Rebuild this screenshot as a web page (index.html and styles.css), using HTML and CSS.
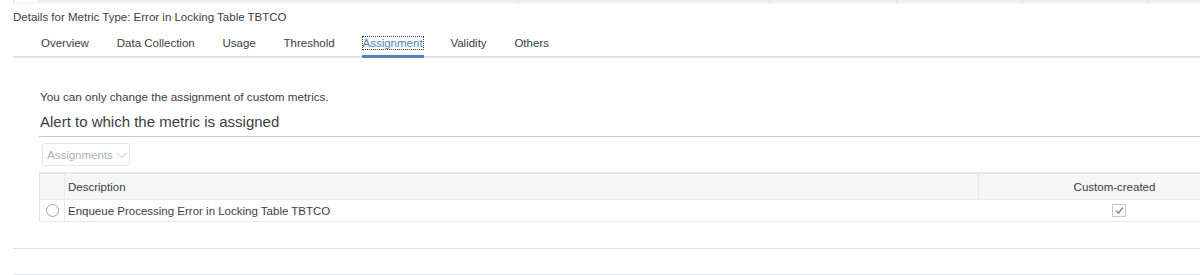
FILE: index.html
```html
<!DOCTYPE html>
<html>
<head>
<meta charset="utf-8">
<link rel="stylesheet" href="styles.css">
</head>
<body>
<div class="strip">
  <div class="cell c1"></div>
  <div class="cell c2"></div>
  <div class="cell c3"></div>
  <div class="cell c4"></div>
  <div class="cell c5"></div>
  <div class="cell c6"></div>
  <div class="cell c7"></div>
  <div class="cell c8"></div>
</div>
<div class="title">Details for Metric Type: Error in Locking Table TBTCO</div>
<div class="tabbar">
  <div class="tab">Overview</div>
  <div class="tab">Data Collection</div>
  <div class="tab">Usage</div>
  <div class="tab">Threshold</div>
  <div class="tab active"><span class="focus">Assignment</span></div>
  <div class="tab">Validity</div>
  <div class="tab">Others</div>
</div>
<div class="content">
  <div class="info">You can only change the assignment of custom metrics.</div>
  <div class="heading">Alert to which the metric is assigned</div>
  <div class="toolbar">
    <div class="btn">Assignments
      <svg class="chev" width="11" height="7" viewBox="0 0 11 7"><path d="M0.5 0.8 L5.5 5.8 L10.5 0.8" fill="none" stroke="#b8c4cf" stroke-width="1"/></svg>
    </div>
  </div>
  <div class="table">
    <div class="row head">
      <div class="sel"></div>
      <div class="desc">Description</div>
      <div class="cust">Custom-created</div>
    </div>
    <div class="row data">
      <div class="sel"><span class="radio"></span></div>
      <div class="desc">Enqueue Processing Error in Locking Table TBTCO</div>
      <div class="cust"><span class="check"><svg width="11" height="9" viewBox="0 0 11 9"><path d="M2 4.6 L4.4 7 L9 1.6" fill="none" stroke="#4a86c0" stroke-width="1.2"/></svg></span></div>
    </div>
  </div>
</div>
<div class="sep sep1"></div>
<div class="sep sep2"></div>
</body>
</html>
```
FILE: styles.css
```css
html, body {
  margin: 0;
  padding: 0;
  background: #ffffff;
  overflow: hidden;
}
body {
  width: 1200px;
  height: 275px;
  font-family: "Liberation Sans", Arial, sans-serif;
  color: #3a3e42;
  font-size: 11.5px;
}
.strip {
  display: flex;
  margin-left: 13px;
  height: 3px;
  background: #efefef;
  border-bottom: 1px solid #f4f4f4;
}
.cell {
  height: 3px;
  border-right: 1px solid #e2e2e2;
  box-sizing: border-box;
}
.c1 { width: 2px; border-right: none; }
.c2 { width: 22px; background: #ffffff; border-right: none; }
.c3 { width: 481px; }
.c4 { width: 252px; }
.c5 { width: 127px; }
.c6 { width: 126px; }
.c7 { width: 126px; }
.c8 { flex: 1; border-right: none; }
.title {
  padding-left: 13px;
  height: 27px;
  line-height: 27px;
  font-size: 11.5px;
}
.tabbar {
  display: flex;
  margin-left: 13px;
  padding-left: 28px;
  gap: 27.8px;
  height: 25px;
  border-bottom: 2px solid #d5e3f0;
}
.tab {
  height: 25px;
  line-height: 25px;
  font-size: 11.5px;
  color: #3a3e42;
  position: relative;
}
.tab.active {
  color: #4c85bb;
}
.tab.active::after {
  content: "";
  position: absolute;
  left: -1px;
  right: -1px;
  bottom: -2px;
  height: 3px;
  background: #4f86b8;
}
.focus {
  outline: 1px dotted #444;
  outline-offset: 0px;
}
.content {
  padding-left: 39px;
  padding-top: 31px;
}
.info {
  height: 16px;
  line-height: 16px;
  font-size: 11.7px;
  padding-left: 1px;
}
.heading {
  margin-top: 7px;
  height: 24px;
  line-height: 20px;
  font-size: 15px;
  padding-left: 1px;
  border-bottom: 1px solid #c9c9c9;
}
.toolbar {
  padding-top: 6px;
  padding-left: 3px;
  height: 23px;
}
.btn {
  display: inline-flex;
  align-items: center;
  box-sizing: border-box;
  width: 88px;
  height: 23px;
  padding-left: 4px;
  border: 1px solid #e3e7eb;
  border-radius: 3px;
  color: #a7b5c3;
  font-size: 11.5px;
  gap: 3px;
}
.chev {
  margin-top: 1px;
}
.table {
  margin-top: 6px;
  width: 1215px;
  border-left: 1px solid #e5e5e5;
  box-sizing: border-box;
}
.row {
  display: flex;
  box-sizing: border-box;
  border-bottom: 1px solid #e8e8e8;
}
.row.head {
  height: 28px;
  background: #f6f6f6;
  border-top: 2px solid #e6e6e6;
  border-bottom: 1px solid #ececec;
}
.row.data {
  height: 22px;
}
.sel {
  width: 24px;
  flex: none;
  border-right: 1px solid #e8e8e8;
  display: flex;
  align-items: center;
  justify-content: center;
}
.desc {
  flex: none;
  width: 914px;
  padding-left: 3px;
  box-sizing: border-box;
  border-right: 1px solid #e8e8e8;
  display: flex;
  align-items: center;
}
.data .desc { border-right: none; }
.cust {
  flex: 1;
  display: flex;
  align-items: center;
  justify-content: center;
  padding-right: 4px;
}
.radio {
  display: block;
  width: 11px;
  height: 11px;
  border: 1px solid #a6a6a6;
  border-radius: 50%;
  background: #fff;
  margin-left: 1px;
}
.check {
  display: flex;
  align-items: center;
  justify-content: center;
  width: 12px;
  height: 11px;
  border: 1px solid #c7c7c7;
  margin-left: 9px;
}
.sep {
  margin-left: 13px;
  height: 1px;
  background: #dde7f1;
}
.sep1 { margin-top: 26px; }
.sep2 { margin-top: 25px; }
```
